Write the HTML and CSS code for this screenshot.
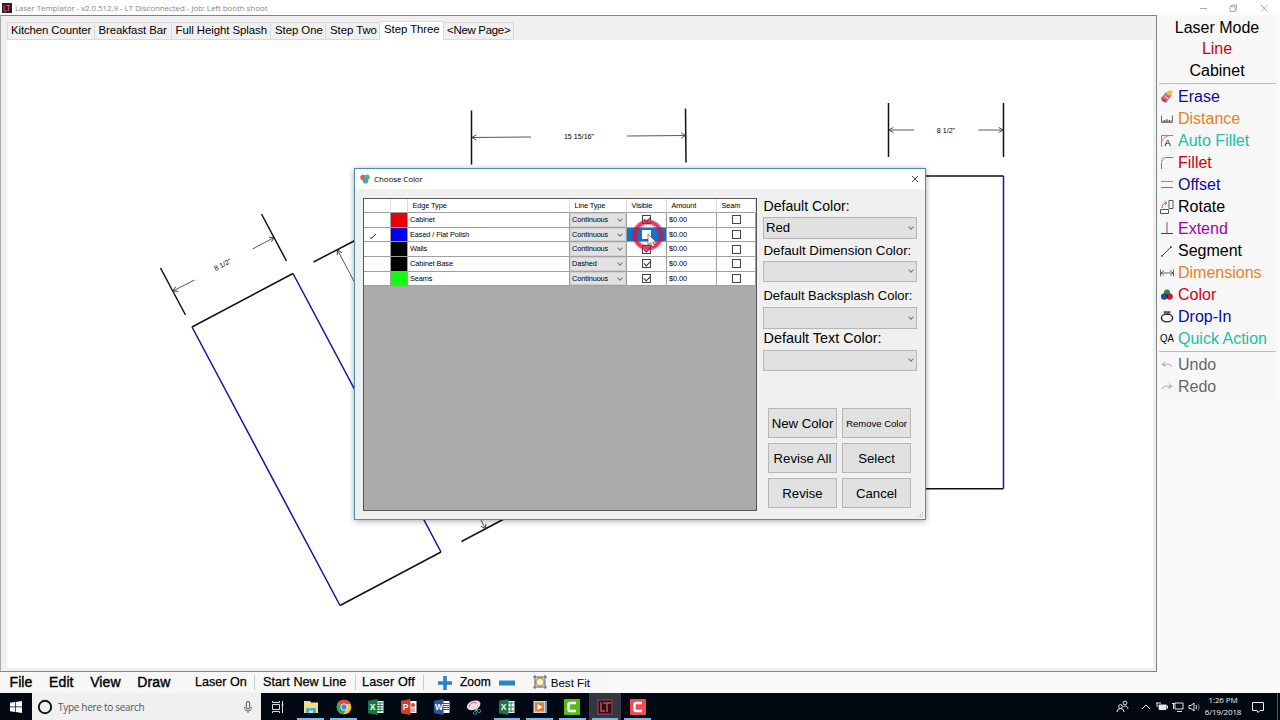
FILE: index.html
```html
<!DOCTYPE html>
<html lang="en">
  <head>
    <meta charset="UTF-8" />
    <title>Laser Templator</title>
    <link rel="stylesheet" href="styles.css">
  </head>
  <body>
    <header class="titlebar">
      <svg class="app-icon" viewBox="0 0 10 10">
        <rect width="10" height="10" fill="#3c1720" />
        <path d="M2 2v6h3M4 2.5h4M6.5 2.5V8" stroke="#b5606c" fill="none" />
      </svg>
      <span class="app-title">Laser Templator - v2.0.512.9 - LT Disconnected - Job: Left booth shoot</span>
      <svg class="window-buttons" viewBox="0 0 76 14">
        <path d="M4 7.5h7M34 5.5h5v5h-5zM35.500 5.500V4h5v5h-1.500M65 4l6.500 6.500M71.500 4l-6.500 6.500" />
      </svg>
    </header>

    <div class="main">
      <section class="workspace">
        <nav class="tabs">
          <a class="tab tab-1">Kitchen Counter</a>
          <a class="tab tab-2">Breakfast Bar</a>
          <a class="tab tab-3">Full Height Splash</a>
          <a class="tab tab-4">Step One</a>
          <a class="tab tab-5">Step Two</a>
          <a class="tab tab-6 active">Step Three</a>
          <a class="tab tab-7">&lt;New Page&gt;</a>
        </nav>
        <svg class="drawing" viewBox="7 40 1146 628">
          <defs>
            <marker id="arrow" viewBox="0 0 8 8" refX="7" refY="4" markerWidth="7" markerHeight="7" markerUnits="userSpaceOnUse" orient="auto">
              <path d="M2 1l5 3-5 3" fill="none" stroke="#333" stroke-width="1" />
            </marker>
          </defs>
          <g class="edge">
            <path d="M192 327L293 273.500M441 552L340 605.500M925 176H1003.500M925 488.700H1003.500" />
            <path d="M160.500 268L185.500 315M261.500 214L286.500 261M313.500 262L356 240M461.500 541.500L504 519" />
            <path d="M471.500 110.500V164.500M685.500 108.500L686 162.500M888.500 103V157M1003.500 103V157" />
          </g>
          <path class="edge-blue" d="M192 327L340 605.500M293 273.500L441 552M1003.500 176V488.500" />
          <g class="dim">
            <path d="M194.500 280L173 291" />
            <path d="M252.500 249L274 237.500" />
            <path d="M356 285L337.500 250" />
            <path d="M480.500 519L485.500 529" />
            <path d="M531 137L472 137.500" />
            <path d="M627 136L685.500 135.500" />
            <path d="M914 130L889 130" />
            <path d="M978.500 130L1003 130" />
          </g>
          <g class="dim-text">
            <text x="579" y="139">15 15/16"</text>
            <text x="946" y="132.500">8 1/2"</text>
            <text x="223" y="267" transform="rotate(-28 223 265)">8 1/2"</text>
          </g>
        </svg>
      </section>

      <aside class="sidebar">
        <div class="mode">
          <div>Laser Mode</div>
          <div class="red">Line</div>
          <div>Cabinet</div>
        </div>
        <ul class="tools">
          <li class="navy">
            <svg viewBox="0 0 14 14"><path d="M1 8l5-6 6 3-6 8z" fill="#d46b72" /><path d="M5 3l4-2.500 4 .5-2.500 5z" fill="#edbd55" /><path d="M1 8l4 1.500 1 3.500-4-2z" fill="#7b587b" /><path d="M4.500 6l4 3" stroke="#fff" /></svg>Erase
          </li>
          <li class="orange">
            <svg viewBox="0 0 14 14"><path d="M1.500 3.500v7h11v-7" fill="none" stroke="#666" /><path d="M1.500 8.500h11v2h-11z" fill="#999" /><path d="M4.500 10V8M7 10V7M9.500 10V8" stroke="#555" /></svg>Distance
          </li>
          <li class="teal">
            <svg viewBox="0 0 14 14"><path d="M1.500 13V1.500H13" stroke="#888" fill="none" /><path d="M1.500 8Q3 3 9 1.500" stroke="#d57983" fill="none" /><text x="4.500" y="11.500" font-size="9.500">A</text></svg>Auto Fillet
          </li>
          <li class="red">
            <svg viewBox="0 0 14 14"><path d="M1.500 13V7M6 1.500h7" stroke="#777" fill="none" /><path d="M1.500 8Q1.500 2 7 1.500" stroke="#d57983" fill="none" /><path d="M1.500 5V1.500H5" stroke="#aaa" stroke-dasharray="1" fill="none" /></svg>Fillet
          </li>
          <li class="navy">
            <svg viewBox="0 0 14 14"><path d="M1 3.500h12" stroke="#dd707d" /><path d="M1 9.500h12" stroke="#777" /></svg>Offset
          </li>
          <li class="black">
            <svg viewBox="0 0 14 14"><path d="M9 .5h4v8H9zM.5 9.500h8v4h-8z" fill="#fff" stroke="#555" /><path d="M2 8q0-5 5-5M4.500 1.500L7 3 5 5" stroke="#d8546b" fill="none" /></svg>Rotate
          </li>
          <li class="purple">
            <svg viewBox="0 0 14 14"><path d="M1 11.500h12" stroke="#444" /><path d="M7 0v11" stroke="#9b4f5c" /></svg>Extend
          </li>
          <li class="black">
            <svg viewBox="0 0 14 14"><path d="M2 12L11 3" stroke="#6b3039" /><circle cx="2" cy="12" r=".8" /><circle cx="11" cy="3" r=".8" /></svg>Segment
          </li>
          <li class="orange">
            <svg viewBox="0 0 14 14"><path d="M.5 3.500v7M13.500 3.500v7M1 7h12M4 4.500L1 7l3 2.500M10 4.500L13 7l-3 2.500" stroke="#555" stroke-width=".9" fill="none" /></svg>Dimensions
          </li>
          <li class="red">
            <svg viewBox="0 0 14 14"><circle cx="7" cy="4.500" r="3" fill="#288647" /><circle cx="4.200" cy="8.500" r="3.200" fill="#294b94" /><circle cx="9.600" cy="8.500" r="3.200" fill="#c91f3a" /><path d="M6 8l1-2 1.500 2-1.500 2z" fill="#321d38" /></svg>Color
          </li>
          <li class="navy">
            <svg viewBox="0 0 14 14"><ellipse cx="7" cy="8" rx="5.600" ry="3.900" stroke="#222" stroke-width="1.400" fill="none" /><path d="M3.500 2h7M5 1.500v3M7 1.500v3M9 1.500v3" stroke="#222" stroke-width="1" /></svg>Drop-In
          </li>
          <li class="teal">
            <svg viewBox="0 0 14 14"><text x="0" y="10" font-size="10" textLength="14" lengthAdjust="spacingAndGlyphs">QA</text></svg>Quick Action
          </li>
        </ul>
        <ul class="tools history">
          <li><svg viewBox="0 0 14 14"><path d="M12 9Q11 5 3 6.500M5 3.500L2 6.500l4 2" stroke="#aaa" fill="none" /></svg>Undo</li>
          <li><svg viewBox="0 0 14 14"><path d="M2 9Q3 5 11 6.500M9 3.500l3 3-4 2" stroke="#aaa" fill="none" /></svg>Redo</li>
        </ul>
      </aside>
    </div>

    <div class="toolbar">
      <div class="menus"><span>File</span><span>Edit</span><span>View</span><span>Draw</span></div>
      <span class="cmd laser-on">Laser On</span>
      <span class="cmd new-line">Start New Line</span>
      <span class="cmd laser-off">Laser Off</span>
      <span class="cmd zoom">
        <svg viewBox="0 0 14 14"><path d="M5.200 0h3.600v5.200H14v3.600H8.800V14H5.200V8.800H0V5.200h5.200z" fill="#2c80cc" /></svg>
        <b>Zoom</b>
        <svg viewBox="0 0 16 14"><path d="M0 4.500h16v5H0z" fill="#2c80cc" /></svg>
      </span>
      <span class="fit">
        <svg viewBox="0 0 14 14"><circle cx="7" cy="7" r="4" fill="#fff5cf" stroke="#d5aa43" stroke-width="1.800" /><path d="M2 0v14M12 0v14M0 2h14M0 12h14" stroke="#46608f" stroke-width="1" /></svg>
        Best Fit
      </span>
    </div>

    <footer class="taskbar">
      <div class="start">
        <svg viewBox="0 0 12 12"><path d="M0 1.700L5 1v4.600H0zM5.700.9L12 0v5.600H5.700zM0 6.300h5v4.600l-5-.7zM5.700 6.300H12V12l-6.300-.9z" fill="#fff" /></svg>
      </div>
      <div class="search">
        <svg class="cortana" viewBox="0 0 16 16"><circle cx="8" cy="8" r="6.200" fill="none" stroke="#111" stroke-width="1.900" /></svg>
        <span>Type here to search</span>
        <svg class="mic" viewBox="0 0 8 12"><rect x="2.300" y=".5" width="3.400" height="7.500" rx="1.700" fill="none" stroke="#444" /><path d="M.8 6v1.500Q1 10 4 10t3.200-2.500V6M4 10v2" fill="none" stroke="#444" stroke-width=".8" /></svg>
      </div>
      <div class="apps">
        <div class="app"><svg viewBox="0 0 16 16"><path d="M2.500 5.500h7v5h-7zM2.500 2v1.500h7V2M2.500 14v-1.500h7V14M12.500 2v12M11.500 6h2" fill="none" stroke="#ddd" /></svg></div>
        <div class="app open"><svg viewBox="0 0 16 16"><path d="M1 2h6l1 1.500h7V14H1z" fill="#f7dc82" /><path d="M3 14V9h10v5h-3v-2.500H6V14z" fill="#43b3dc" /></svg></div>
        <div class="app open"><svg viewBox="0 0 16 16"><circle cx="8" cy="8" r="7.300" fill="#f3c72c" /><path d="M8 8L1.700 4.300A7.300 7.300 0 0 1 14.600 5H8z" fill="#dd4b3e" /><path d="M1.700 4.300A7.300 7.300 0 0 0 7.500 15.300L10 10 8 8z" fill="#36a35a" /><circle cx="8" cy="8" r="3.500" fill="#fff" /><circle cx="8" cy="8" r="2.700" fill="#4285e8" /></svg></div>
        <div class="app"><svg viewBox="0 0 16 16"><path d="M8 2h7.500v12H8z" fill="#fff" /><path d="M9 4h6M9 6.500h6M9 9h6M9 11.500h6M12 3v10" stroke="#21824c" /><path d="M0 1.800L9.500 0v16L0 14.200z" fill="#1c7544" /><text x="1.800" y="11.200" class="letter">X</text></svg></div>
        <div class="app"><svg viewBox="0 0 16 16"><path d="M8 2h7.500v12H8z" fill="#fff" /><circle cx="12" cy="6" r="2" fill="#d04b35" /><path d="M10 10h4M10 12h4" stroke="#d04b35" /><path d="M0 1.800L9.500 0v16L0 14.200z" fill="#c8432b" /><text x="1.800" y="11.200" class="letter">P</text></svg></div>
        <div class="app"><svg viewBox="0 0 16 16"><path d="M8 2h7.500v12H8z" fill="#fff" /><path d="M9 4.500h6M9 6.500h6M9 8.500h6M9 10.500h6" stroke="#2b579a" /><path d="M0 1.800L9.500 0v16L0 14.200z" fill="#2b579a" /><text x="1" y="11.200" class="letter">W</text></svg></div>
        <div class="app"><svg viewBox="0 0 16 16"><ellipse cx="7.500" cy="6.500" rx="7" ry="4.500" fill="#e9e0e6" transform="rotate(-20 7 6)" /><path d="M3 8Q5 2 11 4" stroke="#d65f78" fill="none" /><path d="M6 7l6 5M13 7l-4 6" stroke="#ddd" /><circle cx="13" cy="12" r="1.700" fill="none" stroke="#3779b8" /><circle cx="9" cy="14" r="1.500" fill="none" stroke="#3779b8" /></svg></div>
        <div class="app open"><svg viewBox="0 0 16 16"><path d="M8 2h7.500v12H8z" fill="#fff" /><path d="M9 4h6M9 8h6M9 12h6M12 3v10" stroke="#21824c" /><path d="M0 1.800L9.500 0v16L0 14.200z" fill="#1c7544" /><text x="1.800" y="11.200" class="letter">X</text></svg></div>
        <div class="app open"><svg viewBox="0 0 16 16"><path d="M1.500 2h13v12h-13z" fill="#c7d7e3" /><path d="M13 2.500h2v11h-2z" fill="#6597bd" /><path d="M3 3.500h9v9H3z" fill="#e57b27" /><path d="M5.500 5l5 3-5 3z" fill="#fff" /></svg></div>
        <div class="app open"><svg viewBox="0 0 16 16"><rect width="16" height="16" rx="1" fill="#5abb16" /><path d="M12 4H6Q4.500 4 4.500 5.500v5Q4.500 12 6 12h6" fill="none" stroke="#fff" stroke-width="2.400" /></svg></div>
        <div class="app open current"><svg viewBox="0 0 16 16"><rect x="1" y="1" width="14" height="14" fill="#2a1018" stroke="#a94753" /><path d="M4 3v9h4M6 4h8M10 4v9" fill="none" stroke="#c44c58" stroke-width="1.500" /></svg></div>
        <div class="app open"><svg viewBox="0 0 16 16"><rect width="16" height="16" rx="1" fill="#ed4c50" /><path d="M12 4H6Q4.500 4 4.500 5.500v5Q4.500 12 6 12h6" fill="none" stroke="#fff" stroke-width="2.400" /></svg></div>
      </div>
      <svg class="tray" viewBox="0 0 90 20">
        <g fill="none" stroke="#e5e5e5">
          <circle cx="9" cy="6" r="1.900" /><circle cx="4.500" cy="9.500" r="1.900" /><path d="M1 15q0-3.500 3.500-3.500T8 15M7.500 9.500q4-1.500 4.500 2.500" />
          <path d="M26 12l4-4 4 4" />
          <path d="M43 8h7v4.500h-7z" fill="#e5e5e5" /><path d="M50 9h1.500v2.500M40 6h5M41 6v4" />
          <path d="M59 6h8v6h-8zM61 14.500h5M56 6.500h3M57.500 6v6" />
          <path d="M73 8.500h2l3-2.500v8l-3-2.500h-2zM80 8q1.500 2 0 4" /><path d="M82 6.500q2.500 3.500 0 7" stroke="#777" />
        </g>
      </svg>
      <div class="clock"><span>1:26 PM</span><span>6/19/2018</span></div>
      <svg class="notify" viewBox="0 0 12 12"><path d="M.5 1.500h11v8H8L6 11.500 5 9.500H.5z" fill="none" stroke="#eee" /></svg>
      <div class="show-desktop"></div>
    </footer>

    <div class="dialog">
      <div class="dialog-title">
        <svg class="dialog-icon" viewBox="0 0 10 10"><circle cx="3" cy="3.500" r="2.700" fill="#d95c50" /><circle cx="7" cy="3.300" r="2.700" fill="#59b86d" /><circle cx="5.500" cy="6.800" r="2.800" fill="#4a9ccc" /></svg>
        <span>Choose Color</span>
        <svg class="close" viewBox="0 0 8 8"><path d="M1 1l6 6M7 1L1 7" stroke="#333" stroke-width=".9" /></svg>
      </div>
      <div class="dialog-body">
        <div class="grid">
          <div class="row head"><span></span><span></span><span>Edge Type</span><span>Line Type</span><span>Visible</span><span>Amount</span><span>Seam</span></div>
          <div class="row"><span></span><span class="fill-red"></span><span>Cabinet</span><span class="combo">Continuous<i></i></span><span class="check"><i class="box on"></i></span><span>$0.00</span><span class="check"><i class="box"></i></span></div>
          <div class="row"><span class="pencil-cell"><svg class="pencil" viewBox="0 0 8 6"><path d="M0 5h2l1-1M3 4l3-3" stroke="#333" fill="none" /></svg></span><span class="fill-blue"></span><span>Eased / Flat Polish</span><span class="combo">Continuous<i></i></span><span class="check selected"><i class="box"></i></span><span>$0.00</span><span class="check"><i class="box"></i></span></div>
          <div class="row"><span></span><span class="fill-black"></span><span>Walls</span><span class="combo">Continuous<i></i></span><span class="check"><i class="box on"></i></span><span>$0.00</span><span class="check"><i class="box"></i></span></div>
          <div class="row"><span></span><span class="fill-black"></span><span>Cabinet Base</span><span class="combo">Dashed<i></i></span><span class="check"><i class="box on"></i></span><span>$0.00</span><span class="check"><i class="box"></i></span></div>
          <div class="row"><span></span><span class="fill-green"></span><span>Seams</span><span class="combo">Continuous<i></i></span><span class="check"><i class="box on"></i></span><span>$0.00</span><span class="check"><i class="box"></i></span></div>
        </div>
        <div class="options">
          <label>Default Color:</label>
          <div class="select">Red<i></i></div>
          <label class="tight">Default Dimension Color:</label>
          <div class="select"><i></i></div>
          <label class="tight backsplash">Default Backsplash Color:</label>
          <div class="select"><i></i></div>
          <label class="text-color">Default Text Color:</label>
          <div class="select"><i></i></div>
          <div class="buttons">
            <button>New Color</button><button class="small">Remove Color</button>
            <button>Revise All</button><button>Select</button>
            <button>Revise</button><button>Cancel</button>
          </div>
        </div>
      </div>
      <svg class="grip" viewBox="0 0 6 6"><path d="M4 0h1v1H4zM2 2h1v1H2zM4 2h1v1H4zM0 4h1v1H0zM2 4h1v1H2zM4 4h1v1H4z" fill="#aaa" /></svg>
      <svg class="pointer" viewBox="0 0 34 34">
        <circle cx="16" cy="17" r="13" fill="none" stroke="#d80f3c" stroke-opacity=".35" stroke-width="6" />
        <circle cx="16" cy="17" r="13" fill="none" stroke="#d80f3c" stroke-opacity=".7" stroke-width="3.500" />
        <path d="M16 16v11l2.500-2.300 1.800 4 2.200-1-1.800-3.700h3.600z" fill="#fff" stroke="#333" stroke-width=".6" />
      </svg>
    </div>
  </body>
</html>
```

FILE: styles.css
```css
:root {
  --line: #7f857f;
  --panel: #f0f0f0;
  --control: #e1e1e1;
  --task: #030913;
}

* {
  box-sizing: border-box;
  margin: 0;
  padding: 0;
}

body {
  width: 1280px;
  height: 720px;
  overflow: hidden;
  display: flex;
  flex-direction: column;
  font-family: "Liberation Sans", Arial, sans-serif;
  color: #000;
  background: #fafafa;
  white-space: nowrap;
}

svg {
  display: block;
  flex: none;
}

.titlebar {
  height: 15px;
  display: flex;
  align-items: center;
  background: #fff;
  padding-left: 2px;
}

.app-icon {
  width: 10px;
  height: 10px;
}

.app-title {
  margin-left: 3px;
  font: 8px "Open Sans", sans-serif;
  letter-spacing: -0.08px;
  color: #888;
}

.window-buttons {
  width: 76px;
  height: 14px;
  margin-left: auto;
  margin-right: 8px;
  fill: none;
  stroke: #999;
  stroke-width: 0.8;
}

.main {
  height: 657px;
  display: flex;
}

.workspace {
  width: 1157px;
  padding: 5px 3px 3px 6px;
  background: var(--panel);
  border: 1px solid var(--line);
  border-left-color: #aaa;
}

.tabs {
  height: 19px;
  display: flex;
  align-items: flex-end;
  font-size: 11.4px;
}

.tab {
  height: 18px;
  line-height: 15px;
  padding-left: 4px;
  letter-spacing: -0.05px;
  border: 1px solid #d9d9d9;
  border-left: none;
}

.tab-1 { width: 87.5px; padding-left: 3px; letter-spacing: -0.1px; border-left: 1px solid #d9d9d9; }
.tab-2 { width: 77px; }
.tab-3 { width: 99.5px; }
.tab-4 { width: 55px; }
.tab-5 { width: 54px; }
.tab-6 { width: 64px; }
.tab-7 { width: 70px; padding-left: 3px; letter-spacing: -0.25px; }

.tab.active {
  height: 19px;
  background: #fff;
  border-bottom-color: #fff;
}

.drawing {
  width: 1146px;
  height: 628px;
  background: #fff;
}

.edge,
.edge-blue,
.dim {
  fill: none;
  stroke: #111;
  stroke-width: 1.5;
}

.edge-blue {
  stroke: #1414a8;
}

.dim {
  stroke: #444;
  stroke-width: 0.9;
}

.dim path {
  marker-end: url(#arrow);
}

.dim-text {
  font-size: 7.1px;
  text-anchor: middle;
}

.sidebar {
  width: 121px;
  height: 385px;
  padding: 2px 2px 0 2px;
  background: #f7f7f7;
  font-size: 16px;
}

.mode {
  height: 67px;
  line-height: 21.4px;
  text-align: center;
  padding-right: 1px;
  border-bottom: 1px solid #bbb;
}

.tools {
  list-style: none;
  padding-top: 2px;
}

.tools li {
  height: 22px;
  display: flex;
  align-items: center;
  gap: 4px;
  padding-left: 1px;
}

.tools svg {
  width: 14px;
  height: 14px;
}

.history {
  margin-top: 1px;
  border-top: 1px solid #bbb;
  color: #666;
}

.red { color: #cc0018; }
.navy { color: #0a0a9c; }
.orange { color: #e8821e; }
.teal { color: #20c0a8; }
.black { color: #000; }
.purple { color: #a000b0; }

.toolbar {
  width: 607px;
  height: 21px;
  display: flex;
  align-items: center;
  background: #f7f7f7;
  font-size: 12.6px;
  -webkit-text-stroke: 0.25px #000;
}

.menus {
  width: 185px;
  padding: 0 0 1px 9.5px;
  display: flex;
  gap: 16.6px;
  font-size: 14px;
  line-height: 15px;
  letter-spacing: 0.1px;
  -webkit-text-stroke: 0.4px #000;
}

.cmd {
  height: 15px;
  line-height: 15px;
  border-right: 1px solid #ccc;
}

.laser-on { width: 70px; padding-left: 10px; }
.new-line { width: 101px; padding-left: 8px; letter-spacing: 0.05px; }
.laser-off { width: 68px; padding-left: 6px; letter-spacing: 0.15px; }

.zoom {
  display: flex;
  align-items: center;
  padding-left: 14px;
  gap: 8px;
  border-right: none;
}

.zoom b {
  font-weight: normal;
  font-size: 12px;
}

.zoom svg {
  height: 14px;
}

.fit {
  display: flex;
  align-items: center;
  gap: 4px;
  margin-left: 18px;
  padding-bottom: 1px;
  font-size: 11.6px;
  -webkit-text-stroke: 0;
}

.fit svg {
  width: 14px;
  height: 14px;
}

.taskbar {
  height: 27px;
  display: flex;
  align-items: center;
  background: var(--task);
  color: #eee;
  font-family: "Open Sans", sans-serif;
}

.start {
  width: 32px;
  padding-left: 10px;
}

.start svg {
  width: 12px;
  height: 12px;
}

.search {
  width: 229px;
  height: 27px;
  padding: 0 9px 0 5px;
  display: flex;
  align-items: center;
  background: var(--panel);
  color: #555;
  font-size: 10px;
  letter-spacing: -0.3px;
}

.cortana {
  width: 16px;
  height: 16px;
  margin-right: 5px;
}

.mic {
  width: 8px;
  height: 12px;
  margin-left: auto;
}

.apps {
  display: flex;
  height: 27px;
  margin-left: 0.8px;
}

.app {
  width: 32.7px;
  height: 27px;
  display: flex;
  align-items: center;
  justify-content: center;
  border: 0 solid transparent;
  border-width: 0 3px;
}

.app svg {
  width: 16px;
  height: 16px;
}

.open {
  box-shadow: inset 0 -2px #76b9ed;
}

.current {
  background: #333842;
}

.letter {
  fill: #fff;
  font: bold 8.5px "Liberation Sans", sans-serif;
}

.tray {
  width: 90px;
  height: 20px;
  margin-left: auto;
  margin-right: -7px;
}

.clock {
  width: 48px;
  display: flex;
  flex-direction: column;
  align-items: center;
  font-size: 8px;
  letter-spacing: -0.15px;
  line-height: 12px;
  padding-bottom: 1px;
}

.notify {
  width: 12px;
  height: 12px;
  margin-left: 5px;
}

.show-desktop {
  width: 3px;
  height: 27px;
  margin-left: 13px;
  border-left: 1px solid #555;
}

/* Choose Color window */
.dialog {
  position: absolute;
  left: 354px;
  top: 168px;
  width: 572px;
  height: 352px;
  background: var(--panel);
  border: 1px solid #4b8fb4;
  box-shadow: 0 1px 6px rgba(0, 0, 0, 0.35);
}

.dialog-title {
  height: 20px;
  display: flex;
  align-items: center;
  background: #fff;
  padding: 0 6px 0 5px;
  font: 8px "Open Sans", sans-serif;
  letter-spacing: -0.1px;
}

.dialog-title span {
  padding-bottom: 2px;
}

.dialog-icon {
  width: 10px;
  height: 10px;
  margin-right: 4px;
}

.close {
  width: 8px;
  height: 8px;
  margin-left: auto;
}

.dialog-body {
  display: flex;
  gap: 6px;
  padding: 9px 8px 0;
}

.grid {
  width: 394px;
  height: 313px;
  background: #ababab;
  border: 1px solid #555;
  font-size: 7.4px;
  letter-spacing: -0.12px;
}

.row {
  height: 14.7px;
  display: grid;
  grid-template-columns: 27px 17px 162px 57px 40px 50px 39px;
  background: #fff;
  line-height: 14px;
}

.row > span {
  border-right: 1px solid #a0a0a0;
  border-bottom: 1px solid #a0a0a0;
  padding-left: 2px;
  overflow: hidden;
}

.head {
  height: 14px;
}

.head > span {
  padding-left: 4.5px;
  border-right-color: #ddd;
}

.row > .fill-red { background: #e80000; }
.row > .fill-blue { background: #0000f0; }
.row > .fill-black { background: #000; }
.row > .fill-green { background: #10ff10; }

.row > .combo {
  display: flex;
  justify-content: space-between;
  align-items: center;
  background: var(--control);
  padding-right: 4px;
  box-shadow: inset 0 0 0 1px #d0d0d0;
}

.combo i,
.select i {
  width: 4px;
  height: 4px;
  border: solid #777;
  border-width: 0 1px 1px 0;
  transform: translateY(-1px) rotate(45deg);
}

.row > .check {
  display: flex;
  align-items: center;
  justify-content: center;
  padding: 0;
}

.row > .pencil-cell {
  padding: 5px 0 0 6px;
}

.row > .selected {
  background: #0c74cf;
}

.box {
  width: 9px;
  height: 9px;
  background: #fff;
  border: 1px solid #444;
}

.selected .box {
  border-color: #fff;
}

.box.on::after {
  content: "";
  display: block;
  width: 5px;
  height: 3px;
  margin: 1px;
  border: solid #333;
  border-width: 0 0 1px 1px;
  transform: rotate(-45deg);
}

.pencil {
  width: 8px;
  height: 6px;
}

.options {
  width: 154px;
}

.options label {
  display: block;
  height: 19px;
  line-height: 17px;
  padding-left: 0.5px;
  font-size: 14.1px;
}

.options .tight {
  height: 22px;
  line-height: 23px;
  font-size: 13.3px;
}

.options .backsplash {
  height: 25px;
  line-height: 28px;
  font-size: 12.95px;
}

.options .text-color {
  height: 21px;
  line-height: 19px;
  font-size: 14.4px;
}

.select {
  height: 21.5px;
  padding: 0 3px 0 2px;
  display: flex;
  align-items: center;
  background: var(--control);
  border: 1px solid #b5b5b5;
  font-size: 13.2px;
}

.select i {
  margin-left: auto;
}

.buttons {
  margin: 37px 6px 0 5px;
  display: grid;
  grid-template-columns: 69px 69px;
  grid-auto-rows: 30px;
  gap: 5.2px 5px;
}

.buttons button {
  background: var(--control);
  border: 1px solid #b5b5b5;
  font-family: inherit;
  font-size: 13.2px;
}

.buttons .small {
  font-size: 9.5px;
}

.grip {
  position: absolute;
  right: 1px;
  bottom: 1px;
  width: 6px;
  height: 6px;
}

.pointer {
  position: absolute;
  left: 277px;
  top: 49px;
  width: 34px;
  height: 34px;
}
```
